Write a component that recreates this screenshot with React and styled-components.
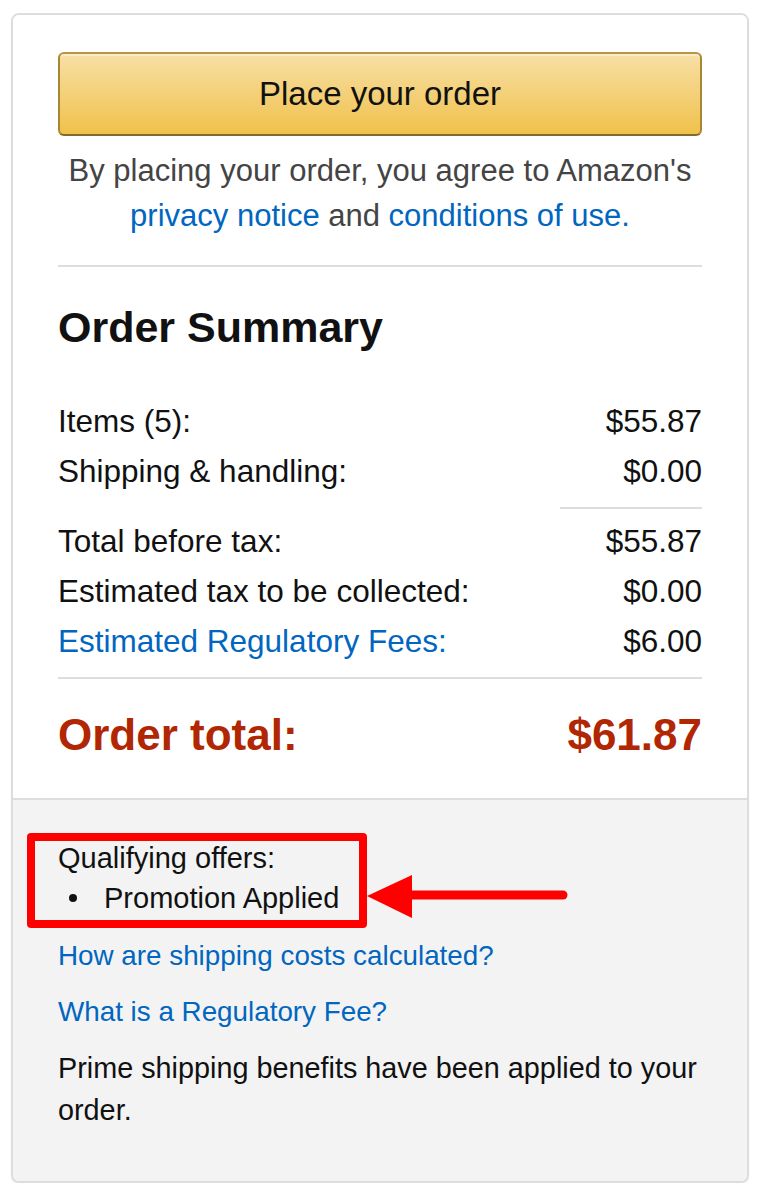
import React from 'react';
import styled, {createGlobalStyle} from 'styled-components';

const GlobalStyle = createGlobalStyle`
  body {
    margin: 0;
    background: #fff;
    font-family: "Liberation Sans", Arial, sans-serif;
    color: #111;
  }
`;

const Page = styled.div`
  padding: 13px 9px 0 11px;
`;

const Card = styled.div`
  width: 738px;
  box-sizing: border-box;
  border: 2px solid #ddd;
  border-radius: 8px;
  overflow: hidden;
  box-shadow: 0 2px 2px rgba(0, 0, 0, 0.06);
`;

const Top = styled.div`
  padding: 37px 45px 33px;
  background: #fff;
`;

const PlaceButton = styled.button`
  display: block;
  width: 100%;
  height: 84px;
  border: 2px solid #a88734;
  border-color: #b8963f #a88734 #846a29;
  border-radius: 6px;
  background: linear-gradient(to bottom, #f7dfa5, #f0c14b);
  box-shadow: inset 0 2px 0 rgba(255, 255, 255, 0.4);
  font-family: inherit;
  font-size: 33px;
  color: #111;
  cursor: pointer;
`;

const Agree = styled.p`
  margin: 12px 0 0;
  text-align: center;
  font-size: 31px;
  line-height: 45px;
  color: #444;
`;

const Link = styled.a`
  color: #0066c0;
  text-decoration: none;
`;

const Rule = styled.hr`
  border: 0;
  border-top: 2px solid #ddd;
  margin: ${p => p.$margin || '0'};
  width: ${p => p.$width || '100%'};
`;

const Heading = styled.h2`
  margin: 35px 0 0;
  font-size: 43px;
  line-height: 50px;
  font-weight: 700;
  color: #111;
`;

const Lines = styled.div`
  margin-top: ${p => p.$top || '0'};
`;

const Row = styled.div`
  display: flex;
  justify-content: space-between;
  font-size: 31.5px;
  line-height: 50px;
  color: #111;
`;

const RowLabel = styled.span`
  color: ${p => (p.$link ? '#0066c0' : '#111')};
`;

const TotalRow = styled.div`
  display: flex;
  justify-content: space-between;
  margin-top: 26px;
  font-size: 44px;
  line-height: 60px;
  font-weight: 700;
  color: #b12704;
`;

const Bottom = styled.div`
  background: #f3f3f3;
  border-top: 2px solid #ddd;
  padding: 38px 45px 50px;
`;

const Offers = styled.div`
  position: relative;
  font-size: 29px;
  line-height: 40px;
  color: #111;
`;

const Bullet = styled.div`
  display: flex;
  align-items: center;
`;

const Dot = styled.span`
  width: 8px;
  height: 8px;
  border-radius: 50%;
  background: #111;
  margin: 0 27px 0 11px;
`;

const Frame = styled.div`
  position: absolute;
  left: -31px;
  top: -5px;
  width: 340px;
  height: 95px;
  box-sizing: border-box;
  border: 8px solid #f00;
  border-radius: 4px;
  pointer-events: none;
`;

const Arrow = styled.svg`
  position: absolute;
  left: 307px;
  top: 34px;
`;

const HelpLink = styled(Link)`
  display: block;
  font-size: 27.8px;
  line-height: 40px;
  margin-top: ${p => p.$top || '0'};
`;

const Note = styled.p`
  margin: 15px 0 0;
  font-size: 28.8px;
  line-height: 42px;
  color: #111;
`;

const App = () => {
  return (
    <Page>
      <GlobalStyle />
      <Card>
        <Top>
          <PlaceButton>Place your order</PlaceButton>
          <Agree>
            By placing your order, you agree to Amazon's{' '}
            <Link href="#">privacy notice</Link> and{' '}
            <Link href="#">conditions of use.</Link>
          </Agree>
          <Rule $margin="27px 0 0" />
          <Heading>Order Summary</Heading>
          <Lines $top="44px">
            <Row><RowLabel>Items (5):</RowLabel><span>$55.87</span></Row>
            <Row><RowLabel>Shipping &amp; handling:</RowLabel><span>$0.00</span></Row>
          </Lines>
          <Rule $width="142px" $margin="11px 0 7px auto" />
          <Lines>
            <Row><RowLabel>Total before tax:</RowLabel><span>$55.87</span></Row>
            <Row><RowLabel>Estimated tax to be collected:</RowLabel><span>$0.00</span></Row>
            <Row><RowLabel $link>Estimated Regulatory Fees:</RowLabel><span>$6.00</span></Row>
          </Lines>
          <Rule $margin="11px 0 0" />
          <TotalRow>
            <span>Order total:</span>
            <span>$61.87</span>
          </TotalRow>
        </Top>
        <Bottom>
          <Offers>
            <div>Qualifying offers:</div>
            <Bullet><Dot />Promotion Applied</Bullet>
            <Frame />
            <Arrow width="204" height="48" viewBox="0 0 204 48">
              <polygon points="2,24 47,3 47,46" fill="#f00" />
              <line x1="44" y1="23" x2="198" y2="23" stroke="#f00" strokeWidth="9" strokeLinecap="round" />
            </Arrow>
          </Offers>
          <HelpLink href="#" $top="18px">How are shipping costs calculated?</HelpLink>
          <HelpLink href="#" $top="16px">What is a Regulatory Fee?</HelpLink>
          <Note>Prime shipping benefits have been applied to your order.</Note>
        </Bottom>
      </Card>
    </Page>
  );
};

export default App;
